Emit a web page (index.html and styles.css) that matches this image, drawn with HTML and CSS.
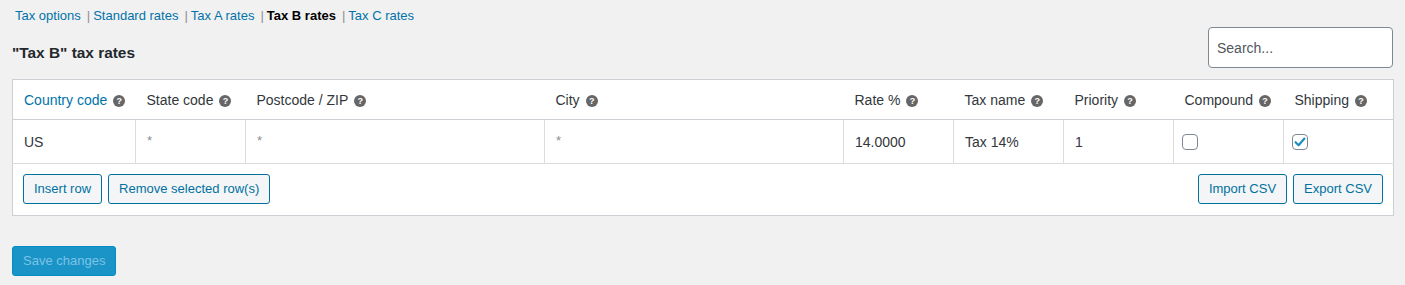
FILE: index.html
```html
<!DOCTYPE html>
<html lang="en">
<head>
<meta charset="utf-8">
<title>Tax B rates</title>
<link rel="stylesheet" href="styles.css">
</head>
<body>
<div class="wrap">
  <nav class="subnav">
    <a href="#">Tax options</a><span class="sep">|</span><a href="#">Standard rates</a><span class="sep">|</span><a href="#">Tax A rates</a><span class="sep">|</span><span class="current">Tax B rates</span><span class="sep">|</span><a href="#">Tax C rates</a>
  </nav>
  <div class="heading-row">
    <h2 class="title">"Tax B" tax rates</h2>
    <input class="search" type="search" placeholder="Search...">
  </div>
  <table class="rates">
    <colgroup>
      <col class="c-country"><col class="c-state"><col class="c-wide"><col class="c-wide">
      <col class="c-std"><col class="c-std"><col class="c-std"><col class="c-std"><col class="c-std">
    </colgroup>
    <thead>
      <tr>
        <th><span class="sortable">Country code</span><span class="help">?</span></th>
        <th>State code<span class="help">?</span></th>
        <th>Postcode / ZIP<span class="help">?</span></th>
        <th>City<span class="help">?</span></th>
        <th>Rate %<span class="help">?</span></th>
        <th>Tax name<span class="help">?</span></th>
        <th>Priority<span class="help">?</span></th>
        <th>Compound<span class="help">?</span></th>
        <th>Shipping<span class="help">?</span></th>
      </tr>
    </thead>
    <tbody>
      <tr>
        <td>US</td>
        <td><span class="star">*</span></td>
        <td><span class="star">*</span></td>
        <td><span class="star">*</span></td>
        <td>14.0000</td>
        <td>Tax 14%</td>
        <td>1</td>
        <td class="check-cell"><span class="checkbox"></span></td>
        <td class="check-cell"><span class="checkbox"><svg viewBox="0 0 16 16" width="16" height="16"><path d="M3.6 8.2 L6.6 11.2 L12.4 4.6" fill="none" stroke="#1e8cbe" stroke-width="2.2" stroke-linecap="round" stroke-linejoin="round"/></svg></span></td>
      </tr>
    </tbody>
    <tfoot>
      <tr>
        <td colspan="9">
          <div class="actions">
            <div class="group">
              <button class="btn" type="button">Insert row</button>
              <button class="btn" type="button">Remove selected row(s)</button>
            </div>
            <div class="group">
              <button class="btn" type="button">Import CSV</button>
              <button class="btn" type="button">Export CSV</button>
            </div>
          </div>
        </td>
      </tr>
    </tfoot>
  </table>
  <div class="submit">
    <button class="btn-primary" type="button" disabled>Save changes</button>
  </div>
</div>
</body>
</html>
```
FILE: styles.css
```css
html, body {
  margin: 0;
  padding: 0;
  background: #f1f1f1;
  font-family: "Liberation Sans", Arial, sans-serif;
  color: #32373c;
}

.wrap {
  padding: 0 11px 0 12px;
}

.subnav {
  display: flex;
  align-items: center;
  padding: 7px 0 0 3px;
  font-size: 13px;
  line-height: 18px;
  height: 18px;
}

.subnav a {
  color: #0073aa;
  text-decoration: none;
}

.subnav .current {
  color: #000;
  font-weight: bold;
}

.subnav .sep {
  color: #8c8f94;
  margin: 0 3px 0 6px;
}

.heading-row {
  display: flex;
  justify-content: space-between;
  align-items: flex-start;
  margin-top: 2px;
}

.title {
  margin: 16px 0 0 0;
  font-size: 15.4px;
  line-height: 20px;
  font-weight: bold;
  color: #23282d;
}

.search {
  box-sizing: border-box;
  width: 185px;
  height: 41px;
  margin: 0 1px 0 0;
  padding: 0 8px;
  border: 1px solid #7e8993;
  border-radius: 4px;
  background: #fff;
  font-family: "Liberation Sans", Arial, sans-serif;
  font-size: 14px;
  color: #32373c;
  outline: none;
}

.search::placeholder {
  color: #50575e;
}

.rates {
  margin-top: 11px;
  width: 100%;
  border-collapse: collapse;
  table-layout: fixed;
  background: #fff;
  border: 1px solid #ccd0d4;
  font-size: 14px;
}

.c-country { width: 123px; }
.c-state { width: 110px; }
.c-wide { width: 299px; }
.c-std { width: 110px; }

.rates th {
  height: 39px;
  padding: 0 10px 0 11px;
  text-align: left;
  font-weight: normal;
  color: #32373c;
  border-bottom: 1px solid #ccd0d4;
  white-space: nowrap;
}

.rates th .sortable {
  color: #0073aa;
}

.help {
  display: inline-block;
  width: 12px;
  height: 12px;
  margin-left: 6px;
  border-radius: 50%;
  background: #666;
  color: #fff;
  font-size: 9px;
  font-weight: bold;
  line-height: 12px;
  text-align: center;
  vertical-align: 1px;
}

.rates tbody td {
  height: 43px;
  padding: 0 10px 0 11px;
  border-right: 1px solid #dcdcde;
  border-bottom: 1px solid #dcdcde;
  color: #32373c;
}

.rates tbody td:last-child {
  border-right: none;
}

.star {
  color: #8c8f94;
  font-size: 13px;
  vertical-align: 3px;
}

.rates tbody td.check-cell {
  padding-left: 8px;
}

.checkbox {
  display: block;
  box-sizing: border-box;
  width: 16px;
  height: 16px;
  border: 1px solid #7e8993;
  border-radius: 4px;
  background: #fff;
  position: relative;
}

.checkbox svg {
  position: absolute;
  left: -1px;
  top: -1px;
}

.rates tfoot td {
  padding: 10px 10px 11px 10px;
}

.actions {
  display: flex;
  justify-content: space-between;
}

.group {
  display: flex;
  gap: 6px;
}

.btn {
  box-sizing: border-box;
  height: 30px;
  padding: 0 10px;
  border: 1px solid #0071a1;
  border-radius: 3px;
  background: #f3f5f6;
  color: #0071a1;
  font-family: "Liberation Sans", Arial, sans-serif;
  font-size: 13px;
  line-height: 28px;
  cursor: pointer;
}

.submit {
  margin-top: 30px;
}

.btn-primary {
  box-sizing: border-box;
  height: 30px;
  padding: 0 10px;
  border: 1px solid #008ec2;
  border-radius: 3px;
  background: #1a93c6;
  color: #7cc3e6;
  font-family: "Liberation Sans", Arial, sans-serif;
  font-size: 13px;
  line-height: 28px;
}
```
